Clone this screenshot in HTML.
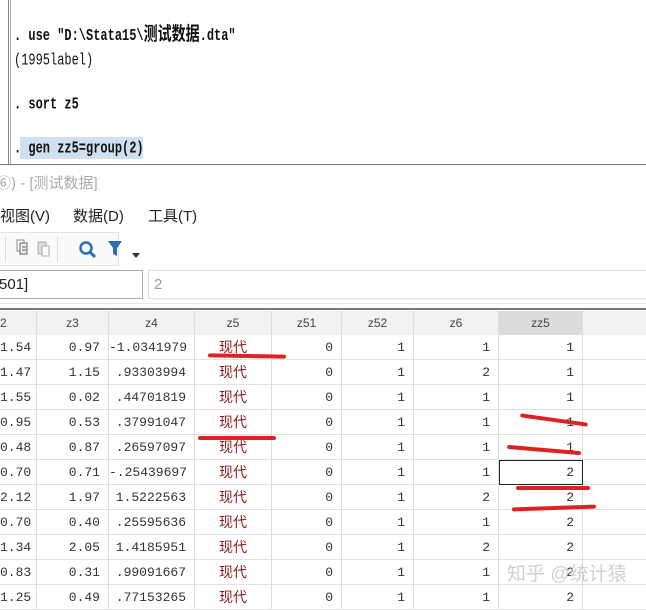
<!DOCTYPE html>
<html><head><meta charset="utf-8"><style>
*{margin:0;padding:0;box-sizing:border-box}
body{width:646px;height:598px;overflow:hidden;background:#fff;position:relative;font-family:"Liberation Sans","Noto Sans CJK SC",sans-serif}
.a{position:absolute}
.mono{font-family:"Liberation Mono","Noto Sans CJK SC",monospace;font-size:12px;color:#111;transform:scaleY(1.35);transform-origin:0 0;white-space:nowrap}
.mono .c{font-size:14px;font-family:"Noto Sans CJK SC",sans-serif;font-weight:bold}
.b{font-weight:bold}
.cell{position:absolute;height:25px;line-height:25px;font-family:"Liberation Mono",monospace;font-size:13px;color:#333;text-align:right;padding-right:8px;border-right:1px solid #ddd;border-bottom:1px solid #e2e2e2}
.hd{position:absolute;top:311px;height:24px;line-height:24px;font-size:12px;color:#444;text-align:center;background:#f2f2f2;border-right:1px solid #ddd;font-family:"Liberation Sans",sans-serif}
.cn{color:#8b1a1a;text-align:center;padding:0;font-family:"Noto Sans CJK SC",sans-serif;font-size:14px}
.red{position:absolute;height:4px;background:#d22;border-radius:3px}
</style></head><body>
<div class="a" style="left:8px;top:0;width:1px;height:164px;background:#888"></div>
<div class="a" style="left:10px;top:0;width:1px;height:164px;background:#aaa"></div>
<div class="a mono b" style="left:14px;top:24px;line-height:14px">. use "D:\Stata15\<span class="c">测试数据</span>.dta"</div>
<div class="a mono" style="left:14px;top:51px">(1995label)</div>
<div class="a" style="left:20px;top:137px;width:123px;height:22px;background:#cfe0f1"></div>
<div class="a mono b" style="left:14px;top:95px">. sort z5</div>
<div class="a mono b" style="left:14px;top:139px">. gen zz5=group(2)</div>
<div class="a" style="left:0;top:164px;width:646px;height:1px;background:#777"></div>
<div class="a" style="left:-4px;top:172px;font-size:15px;color:#aaa">⑥) - [测试数据]</div>
<div class="a" style="left:0;top:205px;font-size:15px;color:#222">视图(V)</div>
<div class="a" style="left:73px;top:205px;font-size:15px;color:#222">数据(D)</div>
<div class="a" style="left:148px;top:205px;font-size:15px;color:#222">工具(T)</div>
<div class="a" style="left:0;top:232px;width:119px;height:34px;border:1px solid #e4e4e4;border-left:none;background:#fafafa"></div>
<div class="a" style="left:5px;top:236px;width:1px;height:26px;background:#ddd"></div>
<div class="a" style="left:57px;top:236px;width:1px;height:26px;background:#ddd"></div>
<svg class="a" style="left:12px;top:238px" width="40" height="22"><rect x="5" y="2" width="7" height="11" fill="#fff" stroke="#888"/><rect x="8" y="5" width="7" height="11" fill="#eee" stroke="#666"/><line x1="10" y1="9" x2="14" y2="9" stroke="#666"/><line x1="10" y1="12" x2="14" y2="12" stroke="#666"/><rect x="26" y="4" width="8" height="12" fill="#ddd" stroke="#aaa"/><rect x="30" y="8" width="7" height="10" fill="#fff" stroke="#aaa"/></svg>
<svg class="a" style="left:78px;top:240px" width="70" height="24"><circle cx="8" cy="8" r="5.5" fill="none" stroke="#2a6fb5" stroke-width="2.5"/><line x1="12" y1="12" x2="17" y2="17" stroke="#2a6fb5" stroke-width="3"/><path d="M30 1 L44 1 L39 8 L39 16 L35 14 L35 8 Z" fill="#2a6fb5"/><path d="M54 13 L62 13 L58 18 Z" fill="#333"/></svg>
<div class="a" style="left:-2px;top:270px;width:145px;height:29px;border:1px solid #aaa;background:#fff;font-size:15px;line-height:27px;color:#222">501]</div>
<div class="a" style="left:148px;top:270px;width:500px;height:29px;border:1px solid #ddd;font-size:15px;line-height:27px;color:#999;padding-left:5px">2</div>
<div class="a" style="left:0;top:303px;width:646px;height:1px;background:#e6e6e6"></div>
<div class="a" style="left:0;top:308px;width:646px;height:2px;background:#777"></div>
<div class="hd" style="left:0;width:37px;text-align:left">2</div>
<div class="hd" style="left:37px;width:72px">z3</div>
<div class="hd" style="left:109px;width:86px">z4</div>
<div class="hd" style="left:195px;width:77px">z5</div>
<div class="hd" style="left:272px;width:70px">z51</div>
<div class="hd" style="left:342px;width:72px">z52</div>
<div class="hd" style="left:414px;width:85px">z6</div>
<div class="hd" style="left:499px;width:84px;background:#dcdcdc">zz5</div>
<div class="hd" style="left:583px;width:63px;border:none"></div>
<div id="g"></div>
<script>
var d=[["1.54","0.97","-1.0341979",0,1,1,1],["1.47","1.15",".93303994",0,1,2,1],["1.55","0.02",".44701819",0,1,1,1],["0.95","0.53",".37991047",0,1,1,1],["0.48","0.87",".26597097",0,1,1,1],["0.70","0.71","-.25439697",0,1,1,2],["2.12","1.97","1.5222563",0,1,2,2],["0.70","0.40",".25595636",0,1,1,2],["1.34","2.05","1.4185951",0,1,2,2],["0.83","0.31",".99091667",0,1,1,2],["1.25","0.49",".77153265",0,1,1,2]];
var x=[0,37,109,195,272,342,414,499,583],h="";
d.forEach(function(r,i){var y=335+i*25;var v=[r[0],r[1],r[2],"现代",r[3],r[4],r[5],r[6]];
for(var c=0;c<8;c++){h+='<div class="cell'+(c==3?' cn':'')+'" style="left:'+x[c]+'px;top:'+y+'px;width:'+(x[c+1]-x[c])+'px;'+(c==0?'text-align:left;padding-left:0':'')+'">'+v[c]+'</div>';}
h+='<div class="cell" style="left:583px;top:'+y+'px;width:63px;border-right:none"></div>';});
document.getElementById('g').innerHTML=h;
</script>
<div class="a" style="left:499px;top:460px;width:84px;height:25px;border:1px solid #222"></div>
<div class="red" style="left:208px;top:354px;width:78px;transform:rotate(1deg)"></div>
<div class="red" style="left:198px;top:436px;width:78px"></div>
<div class="red" style="left:520px;top:418px;width:68px;transform:rotate(8deg)"></div>
<div class="red" style="left:507px;top:448px;width:74px;transform:rotate(5deg)"></div>
<div class="red" style="left:516px;top:486px;width:74px"></div>
<div class="red" style="left:512px;top:506px;width:84px;transform:rotate(-2deg)"></div>
<div class="a" style="left:507px;top:559px;font-size:19px;color:rgba(200,200,200,0.85)">知乎 @统计猿</div>
</body></html>
